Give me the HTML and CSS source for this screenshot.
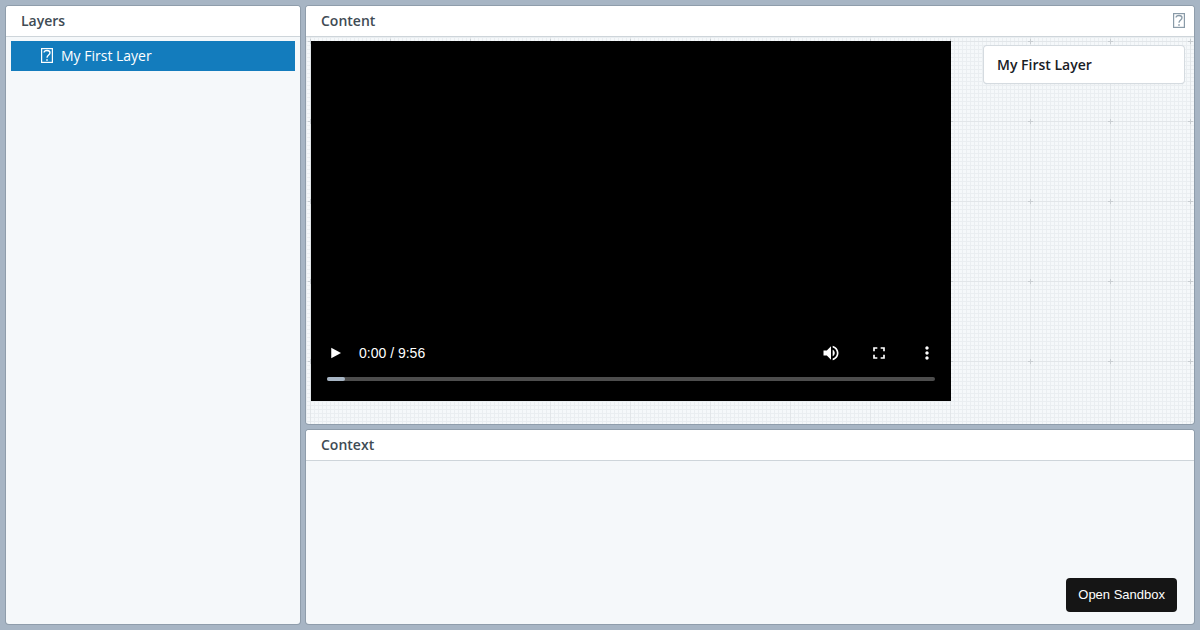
FILE: index.html
```
<!DOCTYPE html>
<html lang="en">
<head>
  <meta charset="UTF-8" />
  <meta name="viewport" content="width=device-width, initial-scale=1.0" />
  <title>Layers</title>
  <link rel="stylesheet" href="styles.css">
</head>
<body>
  <svg class="defs" aria-hidden="true">
    <symbol id="glyph" viewBox="0 0 12 15">
      <rect x=".6" y=".6" width="10.800" height="13.800" fill="none" stroke="currentColor" stroke-width="1.200" />
      <path d="M3 4.500C3.200 3.200 4.300 2.500 6 2.500S9 3.300 9 4.700C9 7 6 7 6 9.800" fill="none" stroke="currentColor" stroke-width="1.300" />
      <path d="M5.200 11.200h1.600v1.500H5.200z" fill="currentColor" />
    </symbol>
  </svg>

  <main class="mosaic">
    <section class="window layers">
      <header class="toolbar"><h2>Layers</h2></header>
      <div class="window-body">
        <ul class="tree">
          <li><a href="#layer" class="tree-node"><svg class="glyph"><use href="#glyph" /></svg>My First Layer</a></li>
        </ul>
      </div>
    </section>

    <section class="window">
      <header class="toolbar">
        <h2>Content</h2>
        <button class="tool" aria-label="More"><svg class="glyph"><use href="#glyph" /></svg></button>
      </header>
      <div class="window-body canvas">
        <svg class="canvas-grid" aria-hidden="true">
          <defs>
            <pattern id="minor" x="4" y="4" width="4" height="4" patternUnits="userSpaceOnUse">
              <path d="M0 0h4v1H1v3H0z" fill="#eaeef1" />
            </pattern>
            <pattern id="major" x="-36" y="-36" width="80" height="80" patternUnits="userSpaceOnUse">
              <path d="M40 0h1v80h-1z M0 40h80v1H0z" fill="#e2e6e9" />
              <path d="M38 40h5v1h-5z M40 38h1v5h-1z" fill="#c8cdd1" />
            </pattern>
          </defs>
          <rect width="100%" height="100%" fill="url(#minor)" />
          <rect width="100%" height="100%" fill="url(#major)" />
        </svg>
        <div class="player">
          <div class="controls">
            <button class="control" id="play" aria-label="Play">
              <svg viewBox="0 0 24 24"><path d="M7 5v14l13-7z" /></svg>
            </button>
            <span class="time">0:00 / 9:56</span>
            <button class="control" aria-label="Mute">
              <svg class="wide" viewBox="0 0 24 24"><path d="M3 9v6h4l5 5V4L7 9H3zm13.500 3c0-1.770-1.020-3.290-2.500-4.030v8.050c1.480-.73 2.500-2.250 2.500-4.020zM14 3.230v2.060c2.890.86 5 3.540 5 6.710s-2.110 5.850-5 6.710v2.060c4.010-.91 7-4.490 7-8.770s-2.990-7.860-7-8.770z" /></svg>
            </button>
            <button class="control" aria-label="Full screen">
              <svg class="wide" viewBox="0 0 24 24"><path d="M7 14H5v5h5v-2H7v-3zm-2-4h2V7h3V5H5v5zm12 7h-3v2h5v-5h-2v3zM14 5v2h3v3h2V5h-5z" /></svg>
            </button>
            <button class="control" aria-label="More options">
              <svg class="wide" viewBox="0 0 24 24"><path d="M12 8c1.100 0 2-.9 2-2s-.9-2-2-2-2 .9-2 2 .9 2 2 2zm0 2c-1.100 0-2 .9-2 2s.9 2 2 2 2-.9 2-2-.9-2-2-2zm0 6c-1.100 0-2 .9-2 2s.9 2 2 2 2-.9 2-2-.9-2-2-2z" /></svg>
            </button>
          </div>
          <div class="timeline"><div class="buffered"></div></div>
        </div>
        <div class="card" id="layer">My First Layer</div>
      </div>
    </section>

    <section class="window">
      <header class="toolbar"><h2>Context</h2></header>
      <div class="window-body"></div>
    </section>
  </main>

  <button class="sandbox">Open Sandbox</button>
</body>
</html>
```
FILE: styles.css
```
* {
  box-sizing: border-box;
  margin: 0;
  padding: 0;
}
body {
  font-family: 'Open Sans', 'Noto Sans', sans-serif;
  font-size: 14px;
  line-height: 18px;
  background: #a7b5c4;
  color: #182026;
}
button {
  border: 0;
  background: none;
  cursor: pointer;
}
.defs {
  position: absolute;
  width: 0;
  height: 0;
}
.mosaic {
  display: grid;
  grid-template-columns: calc(25% - 3px) minmax(0, 1fr);
  grid-template-rows: 28fr 13fr;
  gap: 6px;
  min-height: 100vh;
  padding: 6px;
}
.window {
  display: flex;
  flex-direction: column;
  border-radius: 3px;
  background: #f5f8fa;
  box-shadow: 0 0 0 1px #8f9dab;
  overflow: hidden;
}
.layers {
  grid-row: span 2;
}
.toolbar {
  display: flex;
  align-items: center;
  justify-content: space-between;
  height: 31px;
  padding: 0 9px 0 15px;
  background: #fff;
  border-bottom: 1px solid #ced5da;
}
.toolbar h2 {
  font-size: 14px;
  font-weight: 600;
  color: #404b54;
}
.window-body {
  flex: 1;
  padding: 4px 5px;
}
.glyph {
  display: block;
  width: 12px;
  height: 15px;
  margin-bottom: 1px;
}
.tool {
  color: #8a9ba8;
}
.tree {
  list-style: none;
}
.tree-node {
  display: flex;
  align-items: center;
  gap: 8px;
  height: 30px;
  padding-left: 30px;
  background: #137cbd;
  color: #fff;
  text-decoration: none;
}

/* canvas */
.canvas {
  position: relative;
  display: flex;
  justify-content: space-between;
  align-items: flex-start;
}
.canvas-grid {
  position: absolute;
  top: 0;
  left: 0;
  width: 100%;
  height: 100%;
}
.player {
  position: relative;
  display: flex;
  flex-direction: column;
  justify-content: flex-end;
  width: 640px;
  aspect-ratio: 16 / 9;
  padding-bottom: 20px;
  background: #000;
}
.controls {
  display: flex;
  align-items: center;
  height: 48px;
}
.control {
  width: 48px;
  height: 48px;
  display: flex;
  align-items: center;
  justify-content: center;
}
.control svg {
  width: 18px;
  height: 18px;
  fill: #fff;
}
.control .wide {
  width: 20px;
  height: 20px;
}
.time {
  flex: 1;
  font-family: 'Liberation Sans', sans-serif;
  color: #fff;
}
.timeline {
  height: 4px;
  margin: 0 16px;
  border-radius: 2px;
  background: #4d4d4d;
}
.buffered {
  width: 3%;
  height: 4px;
  border-radius: 2px;
  background: #a7b5c4;
}
.card {
  position: relative;
  width: 200px;
  margin: 5px;
  padding: 10px 13px 9px;
  border-radius: 3px;
  background: #fff;
  box-shadow: 0 0 0 1px #d5dbe0, 0 1px 1px #c9d0d6;
  font-weight: 600;
}
.sandbox {
  position: fixed;
  right: 23px;
  bottom: 18px;
  padding: 8px 12px;
  border-radius: 4px;
  background: #151515;
  color: #fff;
  font: 13px/18px 'Liberation Sans', sans-serif;
}
```
